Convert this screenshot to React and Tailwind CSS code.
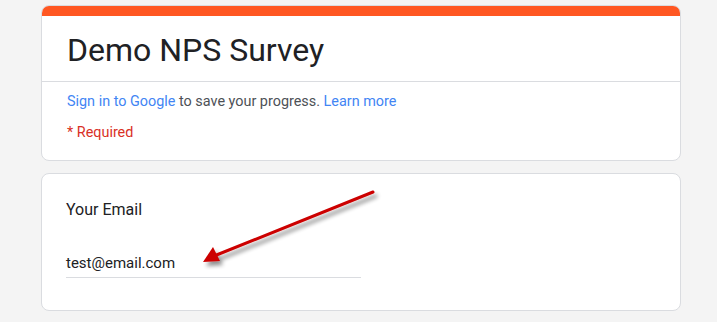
import React from "react";

const Arrow = () => (
  <svg
    className="absolute left-0 top-0 pointer-events-none"
    width="717"
    height="322"
    viewBox="0 0 717 322"
  >
    <defs>
      <filter id="sh" x="-20%" y="-20%" width="140%" height="140%">
        <feGaussianBlur in="SourceAlpha" stdDeviation="2" />
        <feOffset dx="3" dy="4" result="b" />
        <feComponentTransfer>
          <feFuncA type="linear" slope="0.45" />
        </feComponentTransfer>
        <feMerge>
          <feMergeNode />
          <feMergeNode in="SourceGraphic" />
        </feMerge>
      </filter>
    </defs>
    <g filter="url(#sh)">
      <line x1="373" y1="192" x2="214" y2="256" stroke="#cc0000" strokeWidth="3" strokeLinecap="round" />
      <polygon points="203,262 213,247 220,261" fill="#cc0000" />
    </g>
  </svg>
);

export default function App() {
  return (
    <div
      className="relative w-[717px] h-[322px] bg-[#f4f4f4] overflow-hidden"
      style={{ fontFamily: "Roboto, 'Liberation Sans', sans-serif" }}
    >
      <div className="flex flex-col items-start pl-[41px] pt-[5px] gap-[12px]">
        <div className="w-[640px] bg-white rounded-lg border border-[#dadce0] overflow-hidden">
          <div className="h-[10px] bg-[#ff5722]"></div>
          <div className="px-[25px] pt-[14px] pb-[11px] border-b border-[#dadce0]">
            <h1 className="text-[32px] leading-[40px] text-[#202124]">Demo NPS Survey</h1>
          </div>
          <div className="px-[25px] pt-[10px] pb-[17px] text-[14.4px] leading-[20px]">
            <p className="text-[#4d5156]">
              <span className="text-[#4285f4]">Sign in to Google</span> to save your progress.{" "}
              <span className="text-[#4285f4]">Learn more</span>
            </p>
            <p className="text-[#d93025] mt-[11px]">* Required</p>
          </div>
        </div>

        <div className="w-[640px] h-[138px] bg-white rounded-lg border border-[#dadce0] px-[24px] pt-[24px]">
          <p className="text-[16px] leading-[24px] text-[#202124]">Your Email</p>
          <div className="mt-[31px] w-[295px] border-b border-[#dadce0] pb-[4px]">
            <p className="text-[15px] leading-[20px] text-[#202124]">test@email.com</p>
          </div>
        </div>
      </div>
      <Arrow />
    </div>
  );
}
